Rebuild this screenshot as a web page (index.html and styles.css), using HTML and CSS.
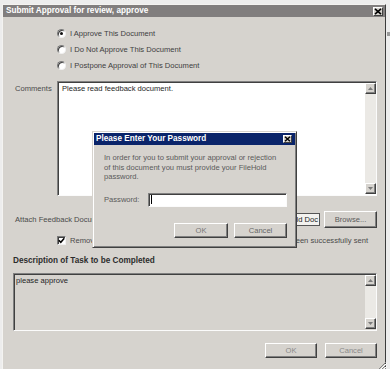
FILE: index.html
```html
<!DOCTYPE html>
<html>
<head>
<meta charset="utf-8">
<link rel="stylesheet" href="styles.css">
</head>
<body>
<div class="screen">
  <div class="window">
    <div class="titlebar">
      <span class="title">Submit Approval for review, approve</span>
      <span class="close-btn main-close"><svg viewBox="0 0 8 7" width="8" height="7"><path d="M1 0.8 L7 6.2 M7 0.8 L1 6.2" stroke="#000" stroke-width="1.6" fill="none"/></svg></span>
    </div>
    <div class="client">
      <div class="radios">
        <div class="radio-row"><span class="radio checked"></span><span>I Approve This Document</span></div>
        <div class="radio-row"><span class="radio"></span><span>I Do Not Approve This Document</span></div>
        <div class="radio-row"><span class="radio"></span><span>I Postpone Approval of This Document</span></div>
      </div>
      <div class="comments-row">
        <span class="field-label">Comments</span>
        <div class="textbox white comments-box">
          <div class="tb-text">Please read feedback document.</div>
          <div class="scrollbar">
            <span class="sb-btn"><svg viewBox="0 0 5 3" width="5" height="3"><polygon points="0,3 2.5,0 5,3" fill="#7a7a7a"/></svg></span>
            <span class="sb-track"></span>
            <span class="sb-btn"><svg viewBox="0 0 5 3" width="5" height="3"><polygon points="0,0 2.5,3 5,0" fill="#7a7a7a"/></svg></span>
          </div>
        </div>
      </div>
      <div class="attach-row">
        <span class="field-label">Attach Feedback Document</span>
        <span class="file-field">Feedback for FileHold Doc</span>
        <span class="btn browse-btn">Browse...</span>
      </div>
      <div class="check-row">
        <span class="checkbox"><svg viewBox="0 0 7 7" width="7" height="7"><polyline points="0.8,3.2 2.8,5.3 6.3,1.2" stroke="#000" stroke-width="1.5" fill="none"/></svg></span>
        <span class="check-text">Remove feedback document from my PC after the document has been successfully sent</span>
      </div>
      <div class="section-title">Description of Task to be Completed</div>
      <div class="textbox face desc-box">
        <div class="tb-text desc-text">please approve</div>
        <div class="scrollbar">
          <span class="sb-btn"><svg viewBox="0 0 5 3" width="5" height="3"><polygon points="0,3 2.5,0 5,3" fill="#7a7a7a"/></svg></span>
          <span class="sb-track"></span>
          <span class="sb-btn"><svg viewBox="0 0 5 3" width="5" height="3"><polygon points="0,0 2.5,3 5,0" fill="#7a7a7a"/></svg></span>
        </div>
      </div>
      <div class="actions">
        <span class="btn action-btn">OK</span>
        <span class="btn action-btn">Cancel</span>
      </div>
    </div>
  </div>
  <span class="edge-mark"></span>
  <span class="grip"><svg viewBox="0 0 9 9" width="9" height="9"><path d="M8 1 L1 8 M8 4 L4 8 M8 7 L7 8" stroke="#808080" stroke-width="1" fill="none"/><path d="M9 2 L2 9 M9 5 L5 9" stroke="#ffffff" stroke-width="1" fill="none"/></svg></span>

  <div class="modal">
    <div class="modal-title">
      <span class="title">Please Enter Your Password</span>
      <span class="close-btn modal-close"><svg viewBox="0 0 7 6" width="7" height="6"><path d="M1 0.7 L6 5.3 M6 0.7 L1 5.3" stroke="#000" stroke-width="1.5" fill="none"/></svg></span>
    </div>
    <div class="modal-body">
      <p class="modal-text">In order for you to submit your approval or rejection<br>of this document you must provide your FileHold<br>password.</p>
      <div class="pw-row">
        <span class="pw-label">Password:</span>
        <span class="pw-input"><span class="caret"></span></span>
      </div>
      <div class="modal-actions">
        <span class="btn modal-ok">OK</span>
        <span class="btn modal-cancel">Cancel</span>
      </div>
    </div>
  </div>
</div>
</body>
</html>
```

FILE: styles.css
```css
* { box-sizing: border-box; }
html, body {
  margin: 0;
  padding: 0;
  width: 390px;
  height: 369px;
  overflow: hidden;
  background: #ededed;
  font-family: "Liberation Sans", Arial, sans-serif;
  font-size: 7.6px;
  line-height: 9px;
  color: #3e3e3e;
}
.screen {
  position: relative;
  width: 390px;
  height: 369px;
}
.window {
  margin: 4px 0 0 2px;
  width: 384px;
  height: 380px;
  background: #d6d3ce;
  border: 1px solid;
  border-color: #f4f3f1 #3c3c3c #3c3c3c #f4f3f1;
}
.titlebar {
  height: 12px;
  background: #817e7e;
  display: flex;
  align-items: center;
  justify-content: space-between;
  padding: 0 2px 0 3px;
}
.title {
  color: #fff;
  font-weight: bold;
  font-size: 8.2px;
  line-height: 12px;
  white-space: nowrap;
}
.close-btn {
  display: flex;
  align-items: center;
  justify-content: center;
  background: #d6d3ce;
  border: 1px solid;
  border-color: #fff #404040 #404040 #fff;
}
.main-close { width: 10px; height: 9px; }
.client {
  padding: 0 8px 0 10px;
}
.radios {
  margin: 8px 0 0 44px;
  display: flex;
  flex-direction: column;
}
.radio-row {
  height: 16px;
  display: flex;
  align-items: center;
  gap: 4px;
  white-space: nowrap;
}
.radio {
  width: 9px;
  height: 9px;
  border-radius: 50%;
  background: #fff;
  border: 1px solid;
  border-color: #7a7a7a #f0f0f0 #f0f0f0 #7a7a7a;
  box-shadow: inset 1px 1px 0 #404040;
  display: flex;
  align-items: center;
  justify-content: center;
}
.radio.checked::after {
  content: "";
  width: 3px;
  height: 3px;
  border-radius: 50%;
  background: #111;
}
.comments-row {
  margin-top: 8px;
  display: flex;
}
.field-label {
  flex: none;
  width: 44px;
  padding-left: 2px;
  white-space: nowrap;
  color: #4a4a4a;
}
.comments-row .field-label { padding-top: 3px; }
.textbox {
  display: flex;
  border: 1px solid;
  border-color: #808080 #fbfbfb #fbfbfb #808080;
  box-shadow: inset 1px 1px 0 #404040;
}
.textbox.white { background: #fff; }
.textbox.face { background: #d6d3ce; }
.comments-box {
  flex: 1;
  height: 115px;
}
.tb-text {
  flex: 1;
  padding: 2px 4px;
  color: #1e1e1e;
}
.scrollbar {
  flex: none;
  width: 11px;
  margin: 1px 0 1px 0;
  display: flex;
  flex-direction: column;
  background: #ebe9e5;
}
.sb-btn {
  width: 11px;
  height: 11px;
  display: flex;
  align-items: center;
  justify-content: center;
  background: #d6d3ce;
  border: 1px solid;
  border-color: #fff #404040 #404040 #fff;
  box-shadow: inset -1px -1px 0 #808080;
}
.sb-track { flex: 1; }
.attach-row {
  margin-top: 15px;
  height: 17px;
  display: flex;
  align-items: center;
}
.attach-row .field-label { width: auto; }
.file-field {
  margin-left: auto;
  width: 190px;
  height: 13px;
  background: #f3f2ef;
  border: 1px solid #555;
  overflow: hidden;
  white-space: nowrap;
  text-align: right;
  line-height: 11px;
  color: #222;
  padding-right: 1px;
}
.btn {
  display: flex;
  align-items: center;
  justify-content: center;
  background: #d6d3ce;
  border: 1px solid;
  border-color: #fff #404040 #404040 #fff;
  box-shadow: inset -1px -1px 0 #808080;
  color: #6a6a6a;
  white-space: nowrap;
}
.browse-btn {
  margin-left: 4px;
  width: 53px;
  height: 17px;
  color: #5a5a5a;
}
.check-row {
  margin-top: 5px;
  height: 14px;
  display: flex;
  align-items: center;
  padding-left: 44px;
}
.checkbox {
  flex: none;
  width: 9px;
  height: 9px;
  background: #fff;
  border: 1px solid;
  border-color: #7a7a7a #f0f0f0 #f0f0f0 #7a7a7a;
  box-shadow: inset 1px 1px 0 #404040;
  display: flex;
  align-items: center;
  justify-content: center;
}
.check-text {
  margin-left: 4px;
  width: 298px;
  text-align: justify;
  text-align-last: justify;
  color: #4a4a4a;
}
.section-title {
  margin-top: 8px;
  font-weight: bold;
  font-size: 8.2px;
  line-height: 12px;
  color: #2c2c2c;
  white-space: nowrap;
}
.desc-box {
  margin-top: 6px;
  height: 58px;
}
.desc-text { padding: 2px 2px; }
.actions {
  margin-top: 12px;
  display: flex;
  justify-content: flex-end;
  gap: 8px;
}
.action-btn {
  width: 52px;
  height: 15px;
  color: #8a8a8a;
}
.edge-mark {
  position: absolute;
  left: 387px;
  top: 28px;
  width: 3px;
  height: 4px;
  background: #9a9a9a;
}
.grip {
  position: absolute;
  left: 378px;
  top: 357px;
  width: 9px;
  height: 9px;
  display: block;
}
.grip svg { display: block; }

/* Modal */
.modal {
  position: absolute;
  left: 92px;
  top: 127px;
  width: 205px;
  height: 117px;
  background: #d6d3ce;
  border: 1px solid;
  border-color: #d6d3ce #404040 #404040 #d6d3ce;
  box-shadow: inset 1px 1px 0 #fff, inset -1px -1px 0 #808080;
  padding: 1px;
}
.modal-title {
  height: 12px;
  background: #0a246a;
  display: flex;
  align-items: center;
  justify-content: space-between;
  padding: 0 3px 0 2px;
}
.modal-close { width: 9px; height: 8px; }
.modal-body {
  padding: 8px 6px 0 10px;
}
.modal-text {
  margin: 0;
  line-height: 9.5px;
  color: #5a5a5a;
  white-space: nowrap;
}
.pw-row {
  margin-top: 11px;
  margin-right: 2px;
  height: 14px;
  display: flex;
  align-items: center;
}
.pw-label {
  width: 44px;
  flex: none;
  color: #5a5a5a;
}
.pw-input {
  flex: 1;
  height: 14px;
  background: #fff;
  border: 1px solid;
  border-color: #808080 #fbfbfb #fbfbfb #808080;
  box-shadow: inset 1px 1px 0 #404040;
  display: flex;
  align-items: center;
  padding-left: 2px;
}
.caret {
  width: 1px;
  height: 9px;
  background: #000;
}
.modal-actions {
  margin-top: 16px;
  margin-right: 2px;
  display: flex;
  justify-content: flex-end;
  gap: 6px;
}
.modal-ok { width: 54px; height: 15px; color: #777; }
.modal-cancel { width: 53px; height: 15px; color: #666; }
```
